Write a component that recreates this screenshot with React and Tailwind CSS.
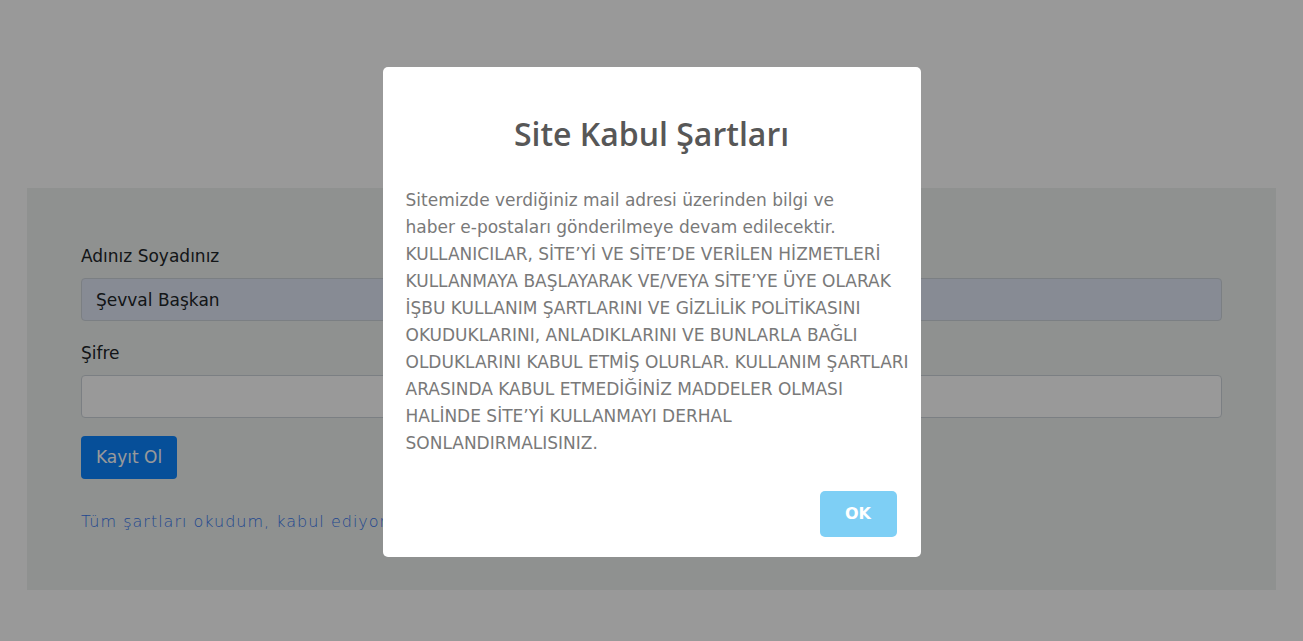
import React from "react";

const FONT = { fontFamily: '"DejaVu Sans", "Open Sans", sans-serif' };

const TERMS = [
  "Sitemizde verdiğiniz mail adresi üzerinden bilgi ve",
  "haber e-postaları gönderilmeye devam edilecektir.",
  "KULLANICILAR, SİTE’Yİ VE SİTE’DE VERİLEN HİZMETLERİ",
  "KULLANMAYA BAŞLAYARAK VE/VEYA SİTE’YE ÜYE OLARAK",
  "İŞBU KULLANIM ŞARTLARINI VE GİZLİLİK POLİTİKASINI",
  "OKUDUKLARINI, ANLADIKLARINI VE BUNLARLA BAĞLI",
  "OLDUKLARINI KABUL ETMİŞ OLURLAR. KULLANIM ŞARTLARI",
  "ARASINDA KABUL ETMEDİĞİNİZ MADDELER OLMASI",
  "HALİNDE SİTE’Yİ KULLANMAYI DERHAL",
  "SONLANDIRMALISINIZ.",
];

function Field({ label, value, filled }) {
  return (
    <div className="flex flex-col">
      <label className="text-[17px] leading-[26px] text-[#212529] mb-[9px]">{label}</label>
      <input
        readOnly
        value={value}
        className={
          "h-[43px] w-full rounded-[4px] border border-[#ced4da] px-[14px] text-[17px] text-[#212529] outline-none " +
          (filled ? "bg-[#e1e8f7]" : "bg-white")
        }
      />
    </div>
  );
}

export default function App() {
  return (
    <div className="relative h-[641px] w-full overflow-hidden bg-white" style={FONT}>
      {/* page underneath */}
      <div className="px-[27px] pt-[188px]">
        <div className="h-[402px] bg-[#eef2f0] px-[54px] pt-[55px]">
          <div className="flex flex-col gap-[19px]">
            <Field label="Adınız Soyadınız" value="Şevval Başkan" filled />
            <Field label="Şifre" value="" />
          </div>
          <button className="mt-[18px] h-[43px] rounded-[4px] bg-[#0a84ff] px-[15px] text-[17px] text-white">
            Kayıt Ol
          </button>
          <p className="mt-[31px] text-[16px] font-light tracking-[1px] text-[#3a78ee]">
            Tüm şartları okudum, kabul ediyorum.
          </p>
        </div>
      </div>

      {/* overlay + modal */}
      <div className="absolute inset-0 flex justify-center bg-black/40 pt-[67px]">
        <div className="flex h-[490px] w-[538px] flex-col rounded-[5px] bg-white px-[23px] pt-[47px] pb-[20px]">
          <h2
            className="text-center text-[32px] font-semibold leading-[40px] text-[#575757]"
            style={{ fontFamily: '"Open Sans", "DejaVu Sans", sans-serif' }}
          >
            Site Kabul Şartları
          </h2>
          <p className="mt-[33px] whitespace-nowrap text-[17px] leading-[27px] text-[#797979]">
            {TERMS.map((line, i) => (
              <React.Fragment key={i}>
                {line}
                {i < TERMS.length - 1 && <br />}
              </React.Fragment>
            ))}
          </p>
          <div className="mt-auto flex justify-end pr-px">
            <button className="h-[46px] w-[77px] rounded-[5px] bg-[#7ecff5] text-[16px] font-semibold text-white">
              OK
            </button>
          </div>
        </div>
      </div>
    </div>
  );
}
